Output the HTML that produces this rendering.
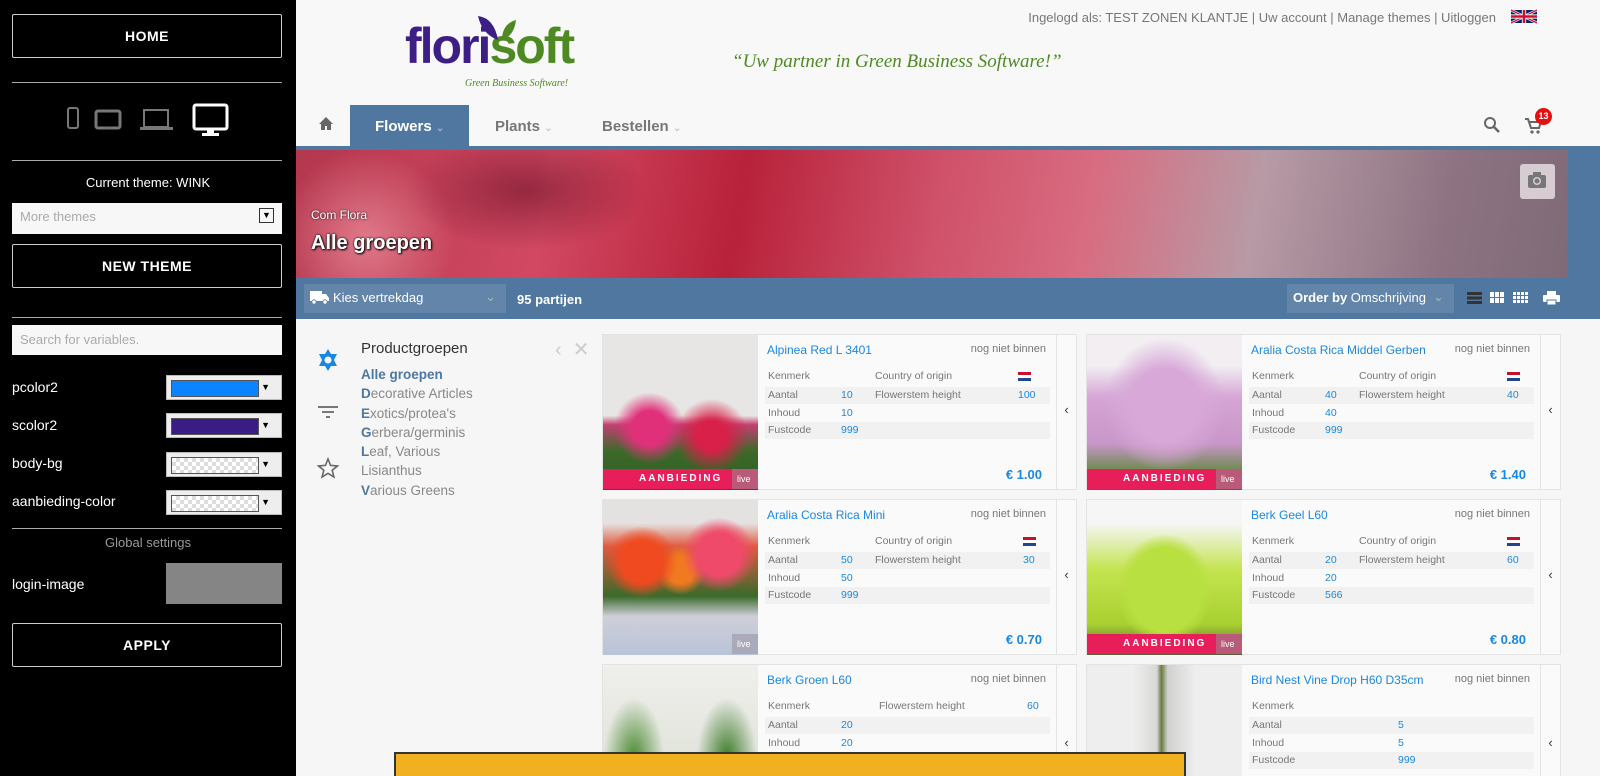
<!DOCTYPE html>
<html><head><meta charset="utf-8">
<style>
*{box-sizing:border-box;margin:0;padding:0}
html,body{width:1600px;height:776px;overflow:hidden}
body{background:#f6f6f6;font-family:"Liberation Sans",sans-serif}
#w{position:relative;width:1600px;height:776px;overflow:hidden;background:#f6f6f6}
.a{position:absolute}
#sb{left:0;top:0;width:296px;height:776px;background:#000;color:#fff}
.btn{position:absolute;left:12px;width:270px;height:44px;border:1px solid #ccc;border-radius:2px;color:#fff;font-weight:bold;font-size:14px;text-align:center;line-height:42px;letter-spacing:.5px}
.hr{position:absolute;left:12px;width:270px;height:1px;background:#aaa}
.lbl{position:absolute;left:12px;font-size:14px;color:#fff}
.sw{position:absolute;left:166px;width:116px;height:25px;background:#eee;border:1px solid #bbb}
.sw i{position:absolute;left:4px;top:4px;width:88px;height:17px;border:1px solid #555}
.sw b{position:absolute;right:11px;top:6px;font-size:9px;color:#000}
.chk{background:repeating-conic-gradient(#ddd 0 25%,#fff 0 50%) 0 0/8px 8px}
.nav{font-size:15px;font-weight:bold;color:#777;top:118px}
.card{position:absolute;width:475px;height:156px;background:#fafafa;border:1px solid #e3e3e3}
.img{position:absolute;left:0;top:0;width:155px;height:155px}
.tag{position:absolute;left:0;bottom:0;width:155px;height:20px;background:#e81e5a;color:#fff;font-size:10px;font-weight:bold;letter-spacing:2px;line-height:20px;padding-left:36px}
.tag s{text-decoration:none;position:absolute;right:0;top:0;width:26px;height:20px;background:#b85a78;letter-spacing:0;font-weight:normal;font-size:9px;padding-left:5px}
.t{position:absolute;left:164px;top:8px;font-size:12px;color:#1a88e0}
.n{position:absolute;right:30px;top:8px;font-size:11px;color:#777}
.r{position:absolute;left:162px;width:285px;height:17px;font-size:10.5px;color:#777;line-height:17px}
.r.s{background:#f1f1f1}
.r span{position:absolute}
.v{color:#1a88e0}
.p{position:absolute;right:34px;top:132px;font-size:13px;font-weight:bold;color:#1a88e0}
.ar{position:absolute;right:0;top:0;width:20px;height:155px;border-left:1px solid #e3e3e3;font-size:13px;color:#333;text-align:center;line-height:150px}
.fl{display:inline-block;width:13px;height:9px;background:linear-gradient(#c8102e 33%,#fff 33% 66%,#21468b 66%)}
</style></head><body><div id="w">
<div id="sb" class="a">
 <div class="btn" style="top:14px">HOME</div>
 <div class="hr" style="top:82px"></div>
 <svg class="a" style="left:60px;top:100px" width="180" height="38" viewBox="0 0 180 38">
  <rect x="8" y="8" width="10" height="20" rx="2" fill="none" stroke="#777" stroke-width="2"/>
  <rect x="36" y="11" width="24" height="17" rx="2" fill="none" stroke="#777" stroke-width="3"/>
  <rect x="84" y="10" width="24" height="17" fill="none" stroke="#777" stroke-width="2"/><rect x="80" y="27" width="33" height="3" fill="#777"/>
  <rect x="134" y="5" width="33" height="24" rx="2" fill="none" stroke="#fff" stroke-width="3"/><rect x="147" y="29" width="7" height="4" fill="#fff"/><rect x="142" y="33" width="17" height="3" fill="#fff"/>
 </svg>
 <div class="hr" style="top:160px"></div>
 <div class="a" style="left:0;width:296px;top:175px;text-align:center;font-size:13px">Current theme: WINK</div>
 <div class="a" style="left:12px;top:203px;width:270px;height:31px;background:#f7f7f7;color:#aaa;font-size:13px;padding:6px 8px">More themes<span class="a" style="right:8px;top:5px;width:15px;height:15px;border:1px solid #333;color:#000;font-size:9px;text-align:center;line-height:13px">&#9660;</span></div>
 <div class="btn" style="top:244px">NEW THEME</div>
 <div class="hr" style="top:317px"></div>
 <div class="a" style="left:12px;top:325px;width:270px;height:30px;background:#f7f7f7;color:#aaa;font-size:13px;padding:7px 8px">Search for variables.</div>
 <div class="lbl" style="top:379px">pcolor2</div><div class="sw" style="top:375px"><i style="background:#0a84ff"></i><b>&#9660;</b></div>
 <div class="lbl" style="top:417px">scolor2</div><div class="sw" style="top:413px"><i style="background:#3a1c84"></i><b>&#9660;</b></div>
 <div class="lbl" style="top:455px">body-bg</div><div class="sw" style="top:452px"><i class="chk"></i><b>&#9660;</b></div>
 <div class="lbl" style="top:493px">aanbieding-color</div><div class="sw" style="top:490px"><i class="chk"></i><b>&#9660;</b></div>
 <div class="hr" style="top:528px"></div>
 <div class="a" style="left:0;width:296px;top:535px;text-align:center;font-size:13px;color:#999">Global settings</div>
 <div class="lbl" style="top:576px">login-image</div>
 <div class="a" style="left:166px;top:563px;width:116px;height:41px;background:#858585"></div>
 <div class="btn" style="top:623px">APPLY</div>
</div>

<div class="a" style="left:296px;top:0;width:1304px;height:146px;background:#f8f8f8"></div>
<div class="a" style="left:405px;top:16px;font-size:50px;font-weight:bold;letter-spacing:-2px;line-height:60px"><span style="color:#3d1e86">flori</span><span style="color:#4e8a23">soft</span></div>
<svg class="a" style="left:476px;top:14px" width="50" height="30"><path d="M2 2 Q18 4 22 26 Q6 20 2 2Z" fill="#3d1e86"/><path d="M26 26 Q26 10 40 6 Q38 22 26 26Z" fill="#4e8a23"/></svg>
<div class="a" style="left:465px;top:78px;font-size:10px;font-style:italic;color:#4e8a23;font-family:'Liberation Serif',serif">Green Business Software!</div>
<div class="a" style="left:732px;top:51px;font-size:19px;font-style:italic;color:#4e8a23;font-family:'Liberation Serif',serif">“Uw partner in Green Business Software!”</div>
<div class="a" style="right:104px;top:10px;font-size:13px;color:#777;white-space:nowrap">Ingelogd als: TEST ZONEN KLANTJE | Uw account | Manage themes | Uitloggen</div>
<svg class="a" style="left:1511px;top:7px" width="26" height="19" viewBox="0 0 60 30"><rect width="60" height="30" fill="#012169"/><path d="M0 0L60 30M60 0L0 30" stroke="#fff" stroke-width="6"/><path d="M0 0L60 30M60 0L0 30" stroke="#c8102e" stroke-width="3"/><path d="M30 0V30M0 15H60" stroke="#fff" stroke-width="10"/><path d="M30 0V30M0 15H60" stroke="#c8102e" stroke-width="6"/></svg>
<svg class="a" style="left:318px;top:116px" width="16" height="15"><path d="M8 1L1 8H3V14H7V10H9V14H13V8H15Z" fill="#666"/></svg>
<div class="a" style="left:350px;top:105px;width:119px;height:42px;background:#4f77a0"></div>
<div class="a nav" style="left:375px;color:#fff">Flowers <span style="font-size:10px;color:#aac">&#8964;</span></div>
<div class="a nav" style="left:495px">Plants <span style="font-size:10px;color:#ccc">&#8964;</span></div>
<div class="a nav" style="left:602px">Bestellen <span style="font-size:10px;color:#ccc">&#8964;</span></div>
<svg class="a" style="left:1483px;top:116px" width="18" height="18"><circle cx="7" cy="7" r="5" fill="none" stroke="#666" stroke-width="2"/><path d="M11 11L16 16" stroke="#666" stroke-width="2.5"/></svg>
<svg class="a" style="left:1524px;top:117px" width="18" height="18"><path d="M1 2H4L7 11H15L17 5H5" fill="none" stroke="#666" stroke-width="2"/><circle cx="8" cy="15" r="1.6" fill="#666"/><circle cx="14" cy="15" r="1.6" fill="#666"/></svg>
<div class="a" style="left:1535px;top:108px;width:17px;height:17px;border-radius:50%;background:#e41111;color:#fff;font-size:9px;font-weight:bold;text-align:center;line-height:17px">13</div>
<div class="a" style="left:296px;top:146px;width:1304px;height:4px;background:#4f77a0"></div>

<div class="a" style="left:296px;top:150px;width:1272px;height:128px;background:
 radial-gradient(ellipse 120px 60px at 230px 40px,rgba(90,10,30,.5),transparent),
 radial-gradient(ellipse 90px 90px at 70px 90px,#e07a8a,transparent),
 linear-gradient(100deg,#b3374e 0%,#d24862 20%,#b8223a 35%,#cf5069 50%,#d86c80 62%,#b79aa5 75%,#8d7382 90%,#7f6a78 100%)"></div>
<div class="a" style="left:1568px;top:150px;width:32px;height:128px;background:#4f77a0"></div>
<div class="a" style="left:1520px;top:164px;width:35px;height:35px;background:#d6ccd1;border-radius:3px"></div>
<svg class="a" style="left:1527px;top:171px" width="20" height="18"><rect x="1" y="4" width="18" height="13" rx="2" fill="#777"/><rect x="6" y="1" width="8" height="4" fill="#777"/><circle cx="10" cy="10" r="4" fill="#d6ccd1"/><circle cx="10" cy="10" r="2.5" fill="#777"/></svg>
<div class="a" style="left:311px;top:208px;font-size:12px;color:#fff;text-shadow:0 0 2px #000">Com Flora</div>
<div class="a" style="left:311px;top:232px;font-size:20px;font-weight:bold;color:#fff;text-shadow:0 0 2px #000,1px 1px 2px #000">Alle groepen</div>

<div class="a" style="left:296px;top:278px;width:1304px;height:41px;background:#4f77a0"></div>
<div class="a" style="left:304px;top:284px;width:202px;height:29px;background:#6385aa;color:#fff;font-size:13px;padding:6px 0 0 29px">Kies vertrekdag<span class="a" style="right:10px;top:5px;color:#9bb">&#8964;</span></div>
<svg class="a" style="left:310px;top:290px" width="20" height="15"><rect x="0" y="1" width="12" height="10" fill="#fff"/><path d="M12 4H16L19 8V11H12Z" fill="#fff"/><circle cx="4" cy="12" r="2.2" fill="#fff" stroke="#6385aa"/><circle cx="15" cy="12" r="2.2" fill="#fff" stroke="#6385aa"/></svg>
<div class="a" style="left:517px;top:292px;color:#fff;font-size:13px;font-weight:bold">95 partijen</div>
<div class="a" style="left:1287px;top:284px;width:167px;height:29px;background:#6385aa;color:#fff;font-size:13px;padding:6px 0 0 6px"><b>Order by</b> Omschrijving<span class="a" style="right:10px;top:5px;color:#9bb">&#8964;</span></div>
<svg class="a" style="left:1466px;top:290px" width="96" height="16"><g fill="#333"><rect x="1" y="2" width="15" height="3"/><rect x="1" y="6.5" width="15" height="3"/><rect x="1" y="11" width="15" height="3"/></g><g fill="#fff"><rect x="24" y="2" width="4" height="5"/><rect x="29" y="2" width="4" height="5"/><rect x="34" y="2" width="4" height="5"/><rect x="24" y="8" width="4" height="5"/><rect x="29" y="8" width="4" height="5"/><rect x="34" y="8" width="4" height="5"/><rect x="47" y="2" width="3" height="3"/><rect x="51" y="2" width="3" height="3"/><rect x="55" y="2" width="3" height="3"/><rect x="59" y="2" width="3" height="3"/><rect x="47" y="6" width="3" height="3"/><rect x="51" y="6" width="3" height="3"/><rect x="55" y="6" width="3" height="3"/><rect x="59" y="6" width="3" height="3"/><rect x="47" y="10" width="3" height="3"/><rect x="51" y="10" width="3" height="3"/><rect x="55" y="10" width="3" height="3"/><rect x="59" y="10" width="3" height="3"/><rect x="81" y="1" width="9" height="4"/><rect x="77" y="5" width="17" height="7" rx="1"/><rect x="81" y="10" width="9" height="5" stroke="#4f77a0"/></g></svg>

<svg class="a" style="left:316px;top:348px" width="24" height="24"><path d="M12 1L15 6H21L18 12L21 18H15L12 23L9 18H3L6 12L3 6H9Z" fill="#1a88e0"/><circle cx="12" cy="12" r="3.5" fill="#f6f6f6"/></svg>
<svg class="a" style="left:318px;top:405px" width="20" height="14"><rect x="0" y="1" width="20" height="2" fill="#777"/><rect x="4" y="6" width="12" height="2" fill="#777"/><rect x="8" y="11" width="4" height="2" fill="#777"/></svg>
<svg class="a" style="left:317px;top:457px" width="22" height="22"><path d="M11 2L13.6 8.4 20.5 8.9 15.2 13.3 16.9 20 11 16.3 5.1 20 6.8 13.3 1.5 8.9 8.4 8.4Z" fill="none" stroke="#666" stroke-width="1.6"/></svg>
<div class="a" style="left:361px;top:340px;font-size:15px;color:#333">Productgroepen</div>
<div class="a" style="left:555px;top:337px;font-size:20px;color:#ccc">&#8249;&nbsp; &#10005;</div>
<div class="a" style="left:361px;top:365px;font-size:13.5px;line-height:19.3px;color:#888">
<b style="color:#4f77a0">Alle groepen</b><br><b style="color:#4f77a0">D</b>ecorative Articles<br><b style="color:#4f77a0">E</b>xotics/protea's<br><b style="color:#4f77a0">G</b>erbera/germinis<br><b style="color:#4f77a0">L</b>eaf, Various<br>Lisianthus<br><b style="color:#4f77a0">V</b>arious Greens</div>

<div class="card" style="left:602px;top:334px">
 <div class="img" style="background:radial-gradient(circle at 30% 60%,#e0307a 0 12%,transparent 25%),radial-gradient(circle at 70% 65%,#d82048 0 10%,transparent 25%),linear-gradient(#e8e6e4 0 52%,#c04070 58%,#3c6a2a 75%,#2f5a22)"></div>
 <div class="tag">AANBIEDING<s>live</s></div>
 <div class="t">Alpinea Red L 3401</div><div class="n">nog niet binnen</div>
 <div class="r" style="top:33px"><span style="left:3px">Kenmerk</span><span style="left:110px">Country of origin</span><span style="left:253px;top:4px" class="fl"></span></div>
 <div class="r s" style="top:52px"><span style="left:3px">Aantal</span><span class="v" style="left:76px">10</span><span style="left:110px">Flowerstem height</span><span class="v" style="left:253px">100</span></div>
 <div class="r" style="top:70px"><span style="left:3px">Inhoud</span><span class="v" style="left:76px">10</span></div>
 <div class="r s" style="top:87px"><span style="left:3px">Fustcode</span><span class="v" style="left:76px">999</span></div>
 <div class="p">€ 1.00</div><div class="ar">&#8249;</div>
</div>
<div class="card" style="left:1086px;top:334px">
 <div class="img" style="background:radial-gradient(ellipse at 50% 45%,#d8a8d8 0 30%,transparent 55%),linear-gradient(#f2eef2 0 20%,#d6a6d6 40%,#c896c8 70%,#6a8a4a 88%,#4a6a3a)"></div>
 <div class="tag">AANBIEDING<s>live</s></div>
 <div class="t">Aralia Costa Rica Middel Gerben</div><div class="n">nog niet binnen</div>
 <div class="r" style="top:33px"><span style="left:3px">Kenmerk</span><span style="left:110px">Country of origin</span><span style="left:258px;top:4px" class="fl"></span></div>
 <div class="r s" style="top:52px"><span style="left:3px">Aantal</span><span class="v" style="left:76px">40</span><span style="left:110px">Flowerstem height</span><span class="v" style="left:258px">40</span></div>
 <div class="r" style="top:70px"><span style="left:3px">Inhoud</span><span class="v" style="left:76px">40</span></div>
 <div class="r s" style="top:87px"><span style="left:3px">Fustcode</span><span class="v" style="left:76px">999</span></div>
 <div class="p">€ 1.40</div><div class="ar">&#8249;</div>
</div>
<div class="card" style="left:602px;top:499px">
 <div class="img" style="background:radial-gradient(circle at 25% 40%,#f04a20 0 14%,transparent 24%),radial-gradient(circle at 75% 35%,#ef4a6a 0 14%,transparent 24%),radial-gradient(circle at 50% 45%,#f07a20 0 12%,transparent 22%),linear-gradient(#e4e2e0 0 15%,#e05a40 30%,#3a6a2a 62%,#cfcfd8 75%,#b8c4d8)"></div>
 <div class="a" style="left:129px;bottom:0;width:26px;height:20px;background:#aab;color:#fff;font-size:9px;line-height:20px;padding-left:5px">live</div>
 <div class="t">Aralia Costa Rica Mini</div><div class="n">nog niet binnen</div>
 <div class="r" style="top:33px"><span style="left:3px">Kenmerk</span><span style="left:110px">Country of origin</span><span style="left:258px;top:4px" class="fl"></span></div>
 <div class="r s" style="top:52px"><span style="left:3px">Aantal</span><span class="v" style="left:76px">50</span><span style="left:110px">Flowerstem height</span><span class="v" style="left:258px">30</span></div>
 <div class="r" style="top:70px"><span style="left:3px">Inhoud</span><span class="v" style="left:76px">50</span></div>
 <div class="r s" style="top:87px"><span style="left:3px">Fustcode</span><span class="v" style="left:76px">999</span></div>
 <div class="p">€ 0.70</div><div class="ar">&#8249;</div>
</div>
<div class="card" style="left:1086px;top:499px">
 <div class="img" style="background:radial-gradient(ellipse 60px 70px at 50% 58%,#b8e040 0 60%,transparent 80%),linear-gradient(#f6f6f6 0 15%,#c4e450 45%,#a8d030 80%,#5a5a3a)"></div>
 <div class="tag">AANBIEDING<s>live</s></div>
 <div class="t">Berk Geel L60</div><div class="n">nog niet binnen</div>
 <div class="r" style="top:33px"><span style="left:3px">Kenmerk</span><span style="left:110px">Country of origin</span><span style="left:258px;top:4px" class="fl"></span></div>
 <div class="r s" style="top:52px"><span style="left:3px">Aantal</span><span class="v" style="left:76px">20</span><span style="left:110px">Flowerstem height</span><span class="v" style="left:258px">60</span></div>
 <div class="r" style="top:70px"><span style="left:3px">Inhoud</span><span class="v" style="left:76px">20</span></div>
 <div class="r s" style="top:87px"><span style="left:3px">Fustcode</span><span class="v" style="left:76px">566</span></div>
 <div class="p">€ 0.80</div><div class="ar">&#8249;</div>
</div>
<div class="card" style="left:602px;top:664px">
 <div class="img" style="background:radial-gradient(ellipse 30px 60px at 20% 60%,#4a8a30,transparent),radial-gradient(ellipse 30px 60px at 80% 60%,#3a7a28,transparent),linear-gradient(#efefec,#d8ddd0)"></div>
 <div class="t">Berk Groen L60</div><div class="n">nog niet binnen</div>
 <div class="r" style="top:33px"><span style="left:3px">Kenmerk</span><span style="left:114px">Flowerstem height</span><span class="v" style="left:262px">60</span></div>
 <div class="r s" style="top:52px"><span style="left:3px">Aantal</span><span class="v" style="left:76px">20</span></div>
 <div class="r" style="top:70px"><span style="left:3px">Inhoud</span><span class="v" style="left:76px">20</span></div>
 <div class="ar" style="line-height:155px">&#8249;</div>
</div>
<div class="card" style="left:1086px;top:664px">
 <div class="img" style="background:linear-gradient(90deg,#eee 0 30%,#d8d8d6 45%,#6a7a40 48%,#d0d0ce 52%,#eee 70%)"></div>
 <div class="t">Bird Nest Vine Drop H60 D35cm</div><div class="n">nog niet binnen</div>
 <div class="r" style="top:33px"><span style="left:3px">Kenmerk</span></div>
 <div class="r s" style="top:52px"><span style="left:3px">Aantal</span><span class="v" style="left:149px">5</span></div>
 <div class="r" style="top:70px"><span style="left:3px">Inhoud</span><span class="v" style="left:149px">5</span></div>
 <div class="r s" style="top:87px"><span style="left:3px">Fustcode</span><span class="v" style="left:149px">999</span></div>
 <div class="ar" style="line-height:155px">&#8249;</div>
</div>
<div class="a" style="left:394px;top:752px;width:792px;height:24px;background:#f0b020;border:2px solid #333;border-bottom:none"></div>
</div></body></html>
